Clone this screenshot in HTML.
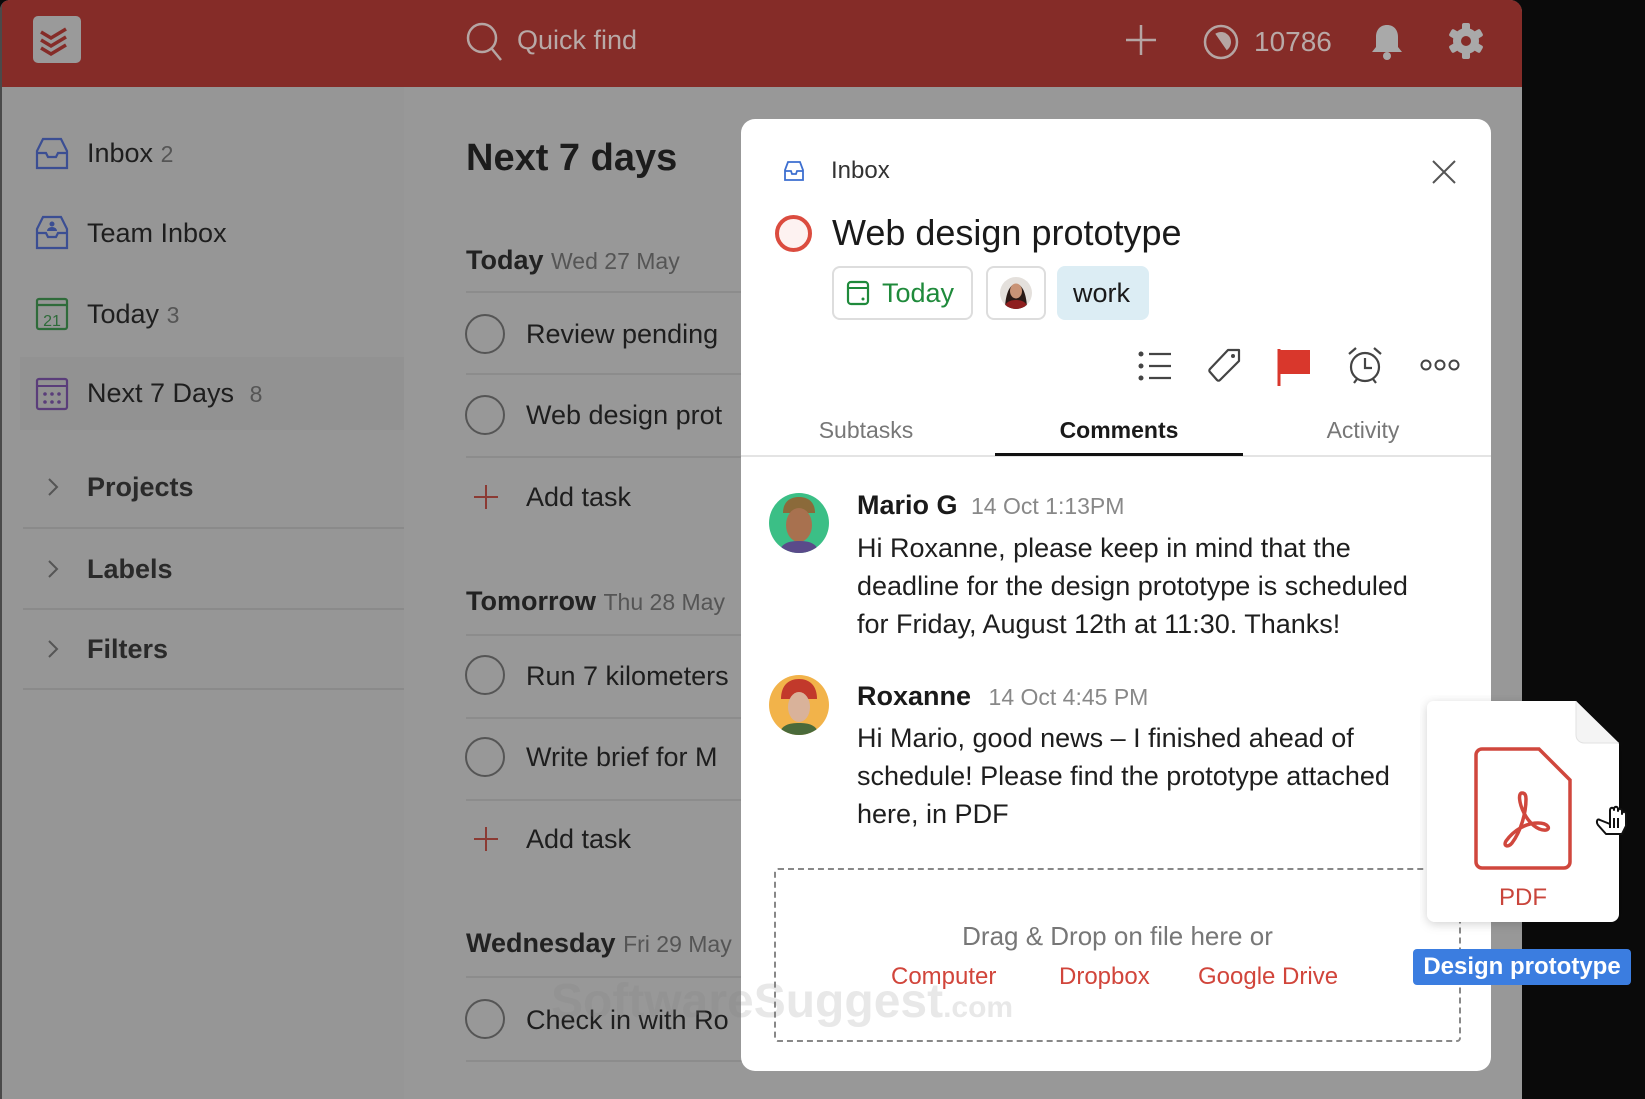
<!DOCTYPE html>
<html><head><meta charset="utf-8"><style>
*{margin:0;padding:0;box-sizing:border-box}
body{width:1645px;height:1099px;background:#0a0a0a;font-family:"Liberation Sans",sans-serif;position:relative;overflow:hidden}
.a{position:absolute;white-space:nowrap}
.t{line-height:40px;height:40px}
</style></head><body>
<div class="a" style="left:0;top:0;width:1522px;height:1099px;background:#989898;border-radius:10px 12px 0 0;overflow:hidden">
  <div class="a" style="left:0;top:0;width:1522px;height:87px;background:#852c28"></div>
  <div class="a" style="left:0;top:87px;width:404px;height:1012px;background:#969696"></div>
  <div class="a" style="left:20px;top:357px;width:384px;height:73px;background:#929292"></div>
  <div class="a" style="left:0;top:0;width:2px;height:1099px;background:#4a4a4a"></div>
</div>
<div class="a" style="left:33px;top:16px;width:48px;height:47px;background:#9a9a9a;border-radius:5px"></div>
<svg class="a" style="left:33px;top:16px" width="48" height="47" viewBox="0 0 48 47"><g fill="none" stroke="#852c28" stroke-width="3.5"><path d="M8 16l10 6 15-9"/><path d="M8 24l10 6 15-9"/><path d="M8 32l10 6 15-9"/></g></svg>
<svg class="a" style="left:465px;top:20px" width="40" height="44" viewBox="0 0 40 44"><circle cx="17" cy="18" r="14" fill="none" stroke="#b5a5a3" stroke-width="2.5"/><path d="M27 29l9 11" stroke="#b5a5a3" stroke-width="2.5"/></svg>
<div class="a t" style="left:517px;top:20px;font-size:27px;color:#b8a9a7">Quick find</div>
<svg class="a" style="left:1124px;top:23px" width="34" height="34"><path d="M17 2v30M2 17h30" stroke="#b5a5a3" stroke-width="2.5"/></svg>
<svg class="a" style="left:1202px;top:23px" width="38" height="38" viewBox="0 0 38 38"><circle cx="19" cy="19" r="16" fill="none" stroke="#b5a5a3" stroke-width="2.5"/><path d="M19 9a10 10 0 0 1 0 20z" fill="#b5a5a3" transform="rotate(-35 19 19)"/></svg>
<div class="a t" style="left:1254px;top:22px;font-size:28px;color:#b8a9a7">10786</div>
<svg class="a" style="left:1370px;top:22px" width="34" height="40" viewBox="0 0 34 40"><path d="M17 3c-7 0-11 5-11 12v10l-4 5h30l-4-5V15c0-7-4-12-11-12z" fill="#a9a9a9"/><circle cx="17" cy="34" r="4" fill="#a9a9a9"/></svg>
<svg class="a" style="left:1447px;top:22px" width="38" height="38" viewBox="0 0 38 38"><g fill="#a9a9a9"><circle cx="19" cy="19" r="13"/><g id="k"><rect x="15" y="1" width="8" height="9" rx="2"/><rect x="15" y="28" width="8" height="9" rx="2"/></g><use href="#k" transform="rotate(60 19 19)"/><use href="#k" transform="rotate(120 19 19)"/></g><circle cx="19" cy="19" r="5" fill="#852c28"/></svg>
<svg class="a" style="left:35px;top:137px" width="34" height="34" viewBox="0 0 34 34"><path d="M8 2h18l6 12v17H2V14z M2 16h9l2 4h8l2-4h9" fill="none" stroke="#3b4e93" stroke-width="2.2"/></svg>
<div class="a t" style="left:87px;top:133px;font-size:27px;color:#1e1e1e">Inbox <span style="font-size:23px;color:#555">2</span></div>
<svg class="a" style="left:35px;top:215px" width="34" height="36" viewBox="0 0 34 36"><path d="M8 2h18l6 12v19H2V14z M2 18h9l2 4h8l2-4h9" fill="none" stroke="#3b4e93" stroke-width="2.2"/><circle cx="17" cy="9" r="2.5" fill="#3b4e93"/><path d="M12 16a5 4 0 0 1 10 0z" fill="#3b4e93"/></svg>
<div class="a t" style="left:87px;top:213px;font-size:27px;color:#1e1e1e">Team Inbox</div>
<svg class="a" style="left:35px;top:297px" width="34" height="34" viewBox="0 0 34 34"><rect x="2" y="2" width="30" height="30" rx="2" fill="none" stroke="#2f6b3a" stroke-width="2.2"/><path d="M2 8h30" stroke="#2f6b3a" stroke-width="2.2"/><text x="17" y="29" font-size="16" text-anchor="middle" fill="#2f6b3a" font-family="Liberation Sans">21</text></svg>
<div class="a t" style="left:87px;top:294px;font-size:27px;color:#1e1e1e">Today <span style="font-size:23px;color:#555">3</span></div>
<svg class="a" style="left:35px;top:377px" width="34" height="34" viewBox="0 0 34 34"><rect x="2" y="2" width="30" height="30" rx="2" fill="none" stroke="#5a3d7a" stroke-width="2.2"/><path d="M2 9h30" stroke="#5a3d7a" stroke-width="2"/><g fill="#5a3d7a"><circle cx="10" cy="17" r="1.8"/><circle cx="17" cy="17" r="1.8"/><circle cx="24" cy="17" r="1.8"/><circle cx="10" cy="25" r="1.8"/><circle cx="17" cy="25" r="1.8"/><circle cx="24" cy="25" r="1.8"/></g></svg>
<div class="a t" style="left:87px;top:373px;font-size:27px;color:#1e1e1e">Next 7 Days <span style="font-size:23px;color:#555;margin-left:8px">8</span></div>
<svg class="a" style="left:46px;top:476px" width="14" height="22"><path d="M3 3l8 8-8 8" fill="none" stroke="#555" stroke-width="2"/></svg>
<div class="a t" style="left:87px;top:467px;font-size:27px;font-weight:bold;color:#2a2a2a">Projects</div>
<div class="a" style="left:23px;top:527px;width:381px;height:2px;background:#8a8a8a"></div>
<svg class="a" style="left:46px;top:558px" width="14" height="22"><path d="M3 3l8 8-8 8" fill="none" stroke="#555" stroke-width="2"/></svg>
<div class="a t" style="left:87px;top:549px;font-size:27px;font-weight:bold;color:#2a2a2a">Labels</div>
<div class="a" style="left:23px;top:608px;width:381px;height:2px;background:#8a8a8a"></div>
<svg class="a" style="left:46px;top:638px" width="14" height="22"><path d="M3 3l8 8-8 8" fill="none" stroke="#555" stroke-width="2"/></svg>
<div class="a t" style="left:87px;top:629px;font-size:27px;font-weight:bold;color:#2a2a2a">Filters</div>
<div class="a" style="left:23px;top:688px;width:381px;height:2px;background:#8a8a8a"></div>
<div class="a" style="left:466px;top:133px;font-size:38px;font-weight:bold;color:#1c1c1c;line-height:50px">Next 7 days</div>
<div class="a t" style="left:466px;top:240px;font-size:27px;font-weight:bold;color:#222">Today <span style="font-weight:normal;font-size:23px;color:#555">Wed 27 May</span></div>
<div class="a" style="left:466px;top:291px;width:280px;height:2px;background:#8c8c8c"></div>
<div class="a" style="left:465px;top:314px;width:40px;height:40px;border:2px solid #555;border-radius:50%"></div>
<div class="a t" style="left:526px;top:314px;font-size:27px;color:#1e1e1e">Review pending</div>
<div class="a" style="left:466px;top:373px;width:280px;height:2px;background:#8c8c8c"></div>
<div class="a" style="left:465px;top:395px;width:40px;height:40px;border:2px solid #555;border-radius:50%"></div>
<div class="a t" style="left:526px;top:395px;font-size:27px;color:#1e1e1e">Web design prot</div>
<div class="a" style="left:466px;top:456px;width:280px;height:2px;background:#8c8c8c"></div>
<svg class="a" style="left:473px;top:484px" width="26" height="26"><path d="M13 1v24M1 13h24" stroke="#8b3a33" stroke-width="2"/></svg>
<div class="a t" style="left:526px;top:477px;font-size:27px;color:#1e1e1e">Add task</div>
<div class="a t" style="left:466px;top:581px;font-size:27px;font-weight:bold;color:#222">Tomorrow <span style="font-weight:normal;font-size:23px;color:#555">Thu 28 May</span></div>
<div class="a" style="left:466px;top:634px;width:280px;height:2px;background:#8c8c8c"></div>
<div class="a" style="left:465px;top:655px;width:40px;height:40px;border:2px solid #555;border-radius:50%"></div>
<div class="a t" style="left:526px;top:656px;font-size:27px;color:#1e1e1e">Run 7 kilometers</div>
<div class="a" style="left:466px;top:717px;width:280px;height:2px;background:#8c8c8c"></div>
<div class="a" style="left:465px;top:737px;width:40px;height:40px;border:2px solid #555;border-radius:50%"></div>
<div class="a t" style="left:526px;top:737px;font-size:27px;color:#1e1e1e">Write brief for M</div>
<div class="a" style="left:466px;top:799px;width:280px;height:2px;background:#8c8c8c"></div>
<svg class="a" style="left:473px;top:826px" width="26" height="26"><path d="M13 1v24M1 13h24" stroke="#8b3a33" stroke-width="2"/></svg>
<div class="a t" style="left:526px;top:819px;font-size:27px;color:#1e1e1e">Add task</div>
<div class="a t" style="left:466px;top:923px;font-size:27px;font-weight:bold;color:#222">Wednesday <span style="font-weight:normal;font-size:23px;color:#555">Fri 29 May</span></div>
<div class="a" style="left:466px;top:976px;width:280px;height:2px;background:#8c8c8c"></div>
<div class="a" style="left:465px;top:999px;width:40px;height:40px;border:2px solid #555;border-radius:50%"></div>
<div class="a t" style="left:526px;top:1000px;font-size:27px;color:#1e1e1e">Check in with Ro</div>
<div class="a" style="left:466px;top:1060px;width:280px;height:2px;background:#8c8c8c"></div>
<div class="a" style="left:741px;top:119px;width:750px;height:952px;background:#fff;border-radius:14px;overflow:hidden">
  <svg class="a" style="left:42px;top:41px" width="22" height="22" viewBox="0 0 22 22"><path d="M5 2h12l3 8v10H2V10z M2 11h6l1 3h4l1-3h6" fill="none" stroke="#3d6fd0" stroke-width="1.8"/></svg>
  <div class="a t" style="left:90px;top:32px;font-size:24px;color:#333">Inbox</div>
  <svg class="a" style="left:690px;top:40px" width="26" height="26"><path d="M2 2l22 22M24 2L2 24" stroke="#555" stroke-width="2"/></svg>
  <div class="a" style="left:34px;top:96px;width:37px;height:37px;border:4px solid #db4c3f;border-radius:50%;background:#fdf2f1"></div>
  <div class="a" style="left:91px;top:92px;font-size:36px;color:#1a1a1a;line-height:44px">Web design prototype</div>
  <div class="a" style="left:91px;top:147px;width:141px;height:54px;border:2px solid #ddd;border-radius:8px"></div>
  <svg class="a" style="left:105px;top:161px" width="24" height="26" viewBox="0 0 24 26"><rect x="2" y="2" width="20" height="22" rx="3" fill="none" stroke="#1f8a3b" stroke-width="2.2"/><path d="M2 8h20" stroke="#1f8a3b" stroke-width="2"/><circle cx="17" cy="19" r="1.5" fill="#1f8a3b"/></svg>
  <div class="a t" style="left:141px;top:154px;font-size:27px;color:#1f8a3b">Today</div>
  <div class="a" style="left:245px;top:147px;width:60px;height:54px;border:2px solid #ddd;border-radius:8px"></div>
  <svg class="a" style="left:258px;top:157px" width="34" height="34" viewBox="0 0 34 34"><defs><clipPath id="c1"><circle cx="17" cy="17" r="16"/></clipPath></defs><g clip-path="url(#c1)"><rect width="34" height="34" fill="#e4e0dc"/><path d="M6 34c0-14 4-26 11-26s11 12 11 26z" fill="#2a1a16"/><ellipse cx="17" cy="15" rx="6" ry="7.5" fill="#c99376"/><path d="M4 34c2-8 7-10 13-10s11 2 13 10z" fill="#8e1e1e"/></g></svg>
  <div class="a" style="left:316px;top:147px;width:92px;height:54px;background:#dcedf4;border-radius:8px"></div>
  <div class="a t" style="left:332px;top:154px;font-size:27px;color:#1a1a1a">work</div>
  <svg class="a" style="left:396px;top:231px" width="36" height="32" viewBox="0 0 36 32"><g fill="#444"><circle cx="4" cy="4" r="2.5"/><circle cx="4" cy="16" r="2.5"/><circle cx="4" cy="28" r="2.5"/></g><path d="M12 4h22M12 16h22M12 28h22" stroke="#444" stroke-width="2.2"/></svg>
  <svg class="a" style="left:465px;top:228px" width="38" height="38" viewBox="0 0 38 38"><path d="M22 3h11v11L14 33a2 2 0 0 1-3 0L4 25a2 2 0 0 1 0-3z" fill="none" stroke="#444" stroke-width="2.2" stroke-linejoin="round"/><circle cx="27" cy="9" r="2" fill="#444"/></svg>
  <svg class="a" style="left:536px;top:228px" width="36" height="40" viewBox="0 0 36 40"><path d="M2 2v37" stroke="#d9372c" stroke-width="3"/><path d="M3 3h30v24H3z" fill="#d9372c"/></svg>
  <svg class="a" style="left:605px;top:227px" width="38" height="40" viewBox="0 0 38 40"><circle cx="19" cy="21" r="14" fill="none" stroke="#444" stroke-width="2.2"/><path d="M19 12v10h7M3 8l7-6M35 8l-7-6M8 37l3-4M30 37l-3-4" fill="none" stroke="#444" stroke-width="2.2"/></svg>
  <svg class="a" style="left:679px;top:238px" width="42" height="16"><g fill="none" stroke="#444" stroke-width="2"><circle cx="6" cy="8" r="4.5"/><circle cx="20" cy="8" r="4.5"/><circle cx="34" cy="8" r="4.5"/></g></svg>
  <div class="a t" style="left:0;top:291px;width:250px;text-align:center;font-size:23px;color:#777">Subtasks</div>
  <div class="a t" style="left:254px;top:291px;width:248px;text-align:center;font-size:23px;font-weight:bold;color:#1a1a1a">Comments</div>
  <div class="a t" style="left:502px;top:291px;width:240px;text-align:center;font-size:23px;color:#777">Activity</div>
  <div class="a" style="left:0;top:336px;width:750px;height:2px;background:#e4e4e4"></div>
  <div class="a" style="left:254px;top:334px;width:248px;height:3px;background:#111"></div>
  <svg class="a" style="left:28px;top:374px" width="60" height="60" viewBox="0 0 60 60"><defs><clipPath id="c2"><circle cx="30" cy="30" r="30"/></clipPath></defs><g clip-path="url(#c2)"><rect width="60" height="60" fill="#3bbf86"/><path d="M14 20c0-12 8-16 16-16s16 4 16 16z" fill="#8b6a3a"/><ellipse cx="30" cy="32" rx="13" ry="17" fill="#a8714f"/><path d="M10 60c2-10 10-12 20-12s18 2 20 12z" fill="#5a4a8a"/></g></svg>
  <div class="a t" style="left:116px;top:366px;font-size:27px;font-weight:bold;color:#1a1a1a">Mario G <span style="font-weight:normal;font-size:23px;color:#888;margin-left:6px">14 Oct 1:13PM</span></div>
  <div class="a" style="left:116px;top:410px;font-size:27px;line-height:38px;color:#1e1e1e">Hi Roxanne, please keep in mind that the<br>deadline for the design prototype is scheduled<br>for Friday, August 12th at 11:30. Thanks!</div>
  <svg class="a" style="left:28px;top:556px" width="60" height="60" viewBox="0 0 60 60"><defs><clipPath id="c3"><circle cx="30" cy="30" r="30"/></clipPath></defs><g clip-path="url(#c3)"><rect width="60" height="60" fill="#f2b34a"/><path d="M12 24c0-14 8-20 18-20s18 6 18 20z" fill="#c2392b"/><ellipse cx="30" cy="32" rx="11" ry="15" fill="#d9b29a"/><path d="M10 60c2-10 10-12 20-12s18 2 20 12z" fill="#4a6a3a"/></g></svg>
  <div class="a t" style="left:116px;top:557px;font-size:27px;font-weight:bold;color:#1a1a1a">Roxanne <span style="font-weight:normal;font-size:23px;color:#888;margin-left:10px">14 Oct 4:45 PM</span></div>
  <div class="a" style="left:116px;top:600px;font-size:27px;line-height:38px;color:#1e1e1e">Hi Mario, good news – I finished ahead of<br>schedule! Please find the prototype attached<br>here, in PDF</div>
  <div class="a" style="left:33px;top:749px;width:687px;height:174px;border:2px dashed #888;border-radius:4px"></div>
  <div class="a t" style="left:33px;top:797px;width:687px;text-align:center;font-size:26px;color:#777">Drag &amp; Drop on file here or</div>
  <div class="a t" style="left:150px;top:838px;font-size:24px;color:#d1453b">Computer</div>
  <div class="a t" style="left:318px;top:838px;font-size:24px;color:#d1453b">Dropbox</div>
  <div class="a t" style="left:457px;top:838px;font-size:24px;color:#d1453b">Google Drive</div>
</div>
<div class="a" style="left:551px;top:972px;font-size:48px;font-weight:bold;color:rgba(130,130,130,0.18);line-height:60px">SoftwareSuggest<span style="font-size:30px">.com</span></div>
<svg class="a" style="left:1420px;top:695px" width="210" height="240" viewBox="0 0 210 240"><defs><filter id="sh" x="-20%" y="-20%" width="140%" height="140%"><feDropShadow dx="0" dy="2" stdDeviation="5" flood-opacity="0.18"/></filter></defs><path d="M14 6h142l43 43v170a8 8 0 0 1-8 8H15a8 8 0 0 1-8-8V13a7 7 0 0 1 7-7z" fill="#fff" filter="url(#sh)"/><path d="M156 6v34a8 8 0 0 0 8 8h35" fill="#f4f4f4" stroke="#e2e2e2"/></svg>
<svg class="a" style="left:1474px;top:747px" width="98" height="124" viewBox="0 0 98 124"><path d="M8 2h57l31 31v82a6 6 0 0 1-6 6H8a6 6 0 0 1-6-6V8a6 6 0 0 1 6-6z" fill="none" stroke="#d0473d" stroke-width="3.5"/><path d="M48 46c-4 0-3 10 2 20s14 18 22 17c5-1 2-7-8-7-12 0-24 7-32 18-3 5 2 7 6 2 9-12 14-30 14-44 0-5-2-6-4-6z" fill="none" stroke="#d0473d" stroke-width="3.5" stroke-linejoin="round"/></svg>
<div class="a t" style="left:1427px;top:878px;width:192px;text-align:center;font-size:24px;color:#c9453b">PDF</div>
<svg class="a" style="left:1594px;top:802px" width="36" height="36" viewBox="0 0 36 36"><path d="M6 18c-3-2-4 2-2 5l8 9h16l4-8V12c0-3-4-3-4 0V9c0-3-4-3-4 0V7c0-3-4-3-4 0v1c0-3-4-3-4 0v14z" fill="#fff" stroke="#111" stroke-width="2" stroke-linejoin="round"/><path d="M16 16v10M20 16v10M24 16v10" stroke="#111" stroke-width="2"/></svg>
<div class="a" style="left:1413px;top:949px;width:218px;height:36px;background:#3b7de0;border-radius:4px;color:#fff;font-weight:bold;font-size:24px;line-height:36px;text-align:center">Design prototype</div>
</body></html>
